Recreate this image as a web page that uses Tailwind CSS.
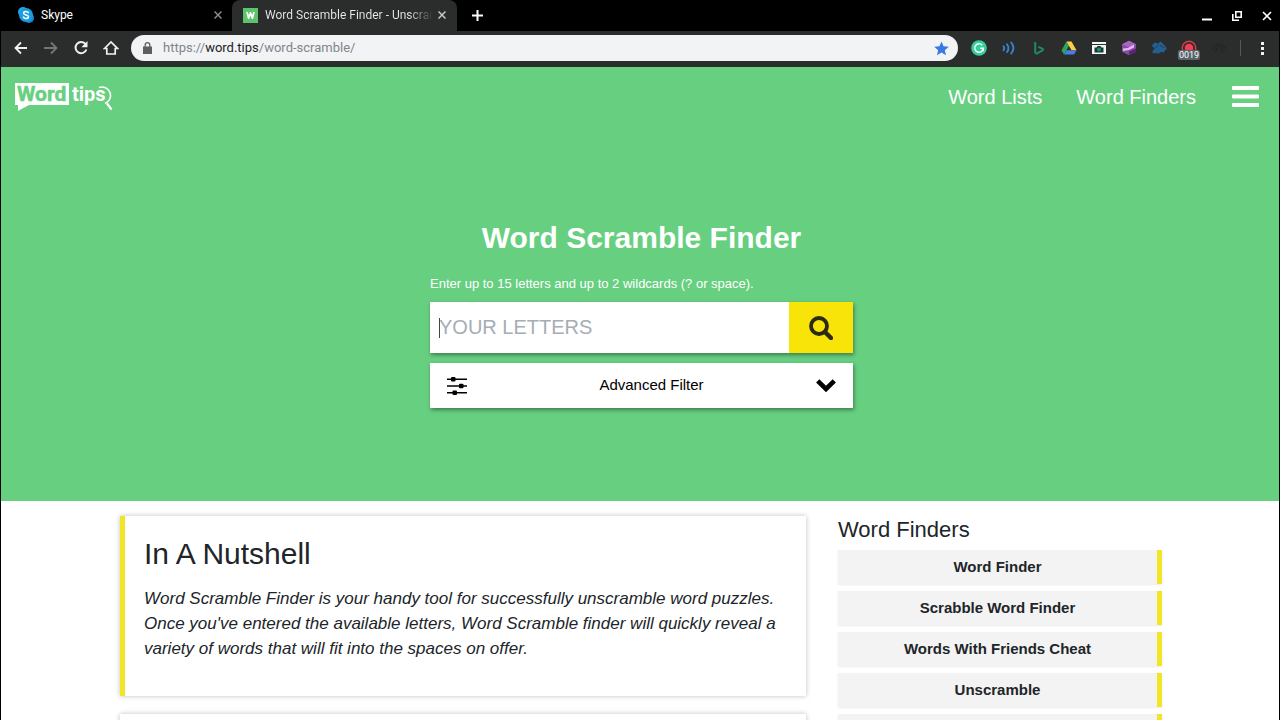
<!DOCTYPE html>
<html lang="en">
<head>
  <meta charset="UTF-8" />
  <meta name="viewport" content="width=device-width, initial-scale=1.0" />
  <title>Word Scramble Finder - Unscramble Words</title>
  <script src="https://cdn.jsdelivr.net/npm/@tailwindcss/browser@4"></script>
</head>
<body class="h-screen overflow-hidden flex flex-col bg-black font-['Liberation_Sans',Arial,sans-serif] text-[#212529]">

  <!-- Tab strip -->
  <div class="h-[31px] shrink-0 flex items-center text-white font-[Roboto,sans-serif] text-xs">
    <div class="w-[232px] h-full flex items-center pl-[18px] pr-[10px] pb-px">
      <svg class="w-4 h-4 shrink-0" viewBox="0 0 16 16">
        <circle cx="5" cy="5" r="5" fill="#1fa8e6" />
        <circle cx="11" cy="11" r="5" fill="#1487d4" />
        <circle cx="8" cy="8" r="7" fill="#1a9ce0" />
        <path d="M10.4 5.6C9.8 4.7 8.9 4.4 8 4.4c-1.400 0-2.400.7-2.400 1.800 0 2.500 4.900 1.200 4.900 3.600 0 1.100-1.100 1.800-2.500 1.800-1.200 0-2.100-.5-2.600-1.500" fill="none" stroke="#fff" stroke-width="1.500" stroke-linecap="round" />
      </svg>
      <span class="ml-[7px] grow">Skype</span>
      <button class="w-2 h-4 flex items-center justify-center" aria-label="Close tab">
        <svg class="w-2 h-2" viewBox="0 0 8 8" stroke="#8a8a8a" stroke-width="1.500"><path d="M.5.5l7 7M7.500.5l-7 7" /></svg>
      </button>
    </div>
    <div class="w-[225px] h-full flex items-center pl-[11px] pr-[11px] pb-px rounded-t-lg bg-[#2b2d2d]">
      <span class="w-[15px] h-[15px] shrink-0 flex items-center justify-center bg-[#5cc46a]">
        <svg class="w-[9px] h-[7px]" viewBox="0 0 9 7" fill="none" stroke="#fff" stroke-width="1.800"><path d="M1 0l1.600 6L4.500 1.200 6.400 6 8 0" /></svg>
      </span>
      <span class="ml-[7px] w-[168px] shrink-0 whitespace-nowrap bg-linear-to-r from-[#e8eaed] from-85% to-transparent bg-clip-text text-transparent">Word Scramble Finder - Unscram</span>
      <button class="ml-auto w-2 h-4 shrink-0 flex items-center justify-center" aria-label="Close tab">
        <svg class="w-2 h-2" viewBox="0 0 8 8" stroke="#c8c8c8" stroke-width="1.500"><path d="M.5.5l7 7M7.500.5l-7 7" /></svg>
      </button>
    </div>
    <button class="w-10 h-full flex items-center justify-center" aria-label="New tab">
      <svg class="w-[11px] h-[11px]" viewBox="0 0 11 11" stroke="#fff" stroke-width="2"><path d="M5.500 0v11M0 5.500h11" /></svg>
    </button>
    <div class="ml-auto flex items-center gap-5 pr-2">
      <button aria-label="Minimize"><svg class="w-[10px] h-[10px]" viewBox="0 0 10 10" fill="#fff"><path d="M0 7.500h10v2H0z" /></svg></button>
      <button aria-label="Restore">
        <svg class="w-[10px] h-[10px]" viewBox="0 0 10 10" fill="none" stroke="#fff" stroke-width="1.600"><path d="M3.800.8h5.400v5.400H3.800zM.8 3v6.200H7" /></svg>
      </button>
      <button aria-label="Close"><svg class="w-[10px] h-[10px]" viewBox="0 0 10 10" stroke="#fff" stroke-width="1.700"><path d="M1 1l8 8M9 1l-8 8" /></svg></button>
    </div>
  </div>

  <!-- Toolbar -->
  <div class="h-9 shrink-0 mx-px flex items-center bg-[#2b2d2d] pl-3 pr-[9px] pb-[2px]">
    <div class="flex items-center gap-[14px]">
      <button aria-label="Back">
        <svg class="w-4 h-4" viewBox="0 0 16 16" fill="none" stroke="#f1f1f1" stroke-width="1.800"><path d="M14 8H2.500M8 2.500L2.500 8 8 13.500" /></svg>
      </button>
      <button aria-label="Forward">
        <svg class="w-4 h-4" viewBox="0 0 16 16" fill="none" stroke="#747676" stroke-width="1.800"><path d="M1 8h12.500M8 2.500l5.500 5.500L8 13.500" /></svg>
      </button>
      <button aria-label="Reload">
        <svg class="w-4 h-4" viewBox="0 0 16 16"><path d="M12.600 4.200A5.600 5.600 0 1 0 13.400 9.500" fill="none" stroke="#f1f1f1" stroke-width="2" /><path d="M14.500 1v6.200H8.300z" fill="#f1f1f1" /></svg>
      </button>
      <button aria-label="Home">
        <svg class="w-4 h-4" viewBox="0 0 16 16" fill="none" stroke="#f1f1f1" stroke-width="1.700"><path d="M1.500 8.500L8 2l6.500 6.500H12.200V14H3.800V8.500z" /></svg>
      </button>
    </div>
    <div class="ml-3 grow h-[26px] flex items-center rounded-full bg-[#f1f3f4] pl-3 pr-[9px] font-[Roboto,sans-serif] text-[13px]">
      <svg class="w-[9px] h-3" viewBox="0 0 9 12"><path d="M0 4.500h9V12H0z" fill="#5c5f61" /><path d="M2.200 5V3a2.300 2.300 0 0 1 4.600 0v2" fill="none" stroke="#5c5f61" stroke-width="1.300" /></svg>
      <p class="ml-[11px] grow text-[#80868b]">https://<span class="text-[#202124]">word.tips</span>/word-scramble/</p>
      <svg class="w-[15px] h-[15px]" viewBox="0 0 24 24" fill="#3b78e7"><path d="M12 .8l3.300 7.700 8.400.7-6.400 5.500 2 8.200L12 18.500l-7.300 4.400 2-8.200L.3 9.200l8.400-.7z" /></svg>
    </div>
    <div class="ml-[13px] flex items-center gap-[14px]">
      <svg class="w-4 h-4" viewBox="0 0 16 16"><circle cx="8" cy="8" r="7.800" fill="#35cf98" /><path d="M11.300 5.200A4.300 4.300 0 1 0 12.300 8.300H9.200M12.200 8.300v2.900" fill="none" stroke="#fff" stroke-width="1.400" /></svg>
      <svg class="w-4 h-4" viewBox="0 0 16 16" fill="none" stroke="#3a80cc" stroke-width="1.900" stroke-linecap="round"><path d="M2.500 6.200q1.500 2 0 4M6 4.200q3 4 0 7.800M10.200 2.500q4.500 5.500 0 11" /></svg>
      <svg class="w-4 h-4" viewBox="0 0 16 16" fill="none" stroke="#1f8a62" stroke-width="2" stroke-linejoin="round"><path d="M4.200 2v10.800l1.600.8 6-3.400V8.800L7.300 6.900" /></svg>
      <svg class="w-4 h-4" viewBox="0 0 16 16"><path d="M5.500 1.500L8 5.800 3 14.500.500 10.200z" fill="#2ba55c" /><path d="M5.500 1.500h5l5 8.700h-5z" fill="#f9cf48" /><path d="M5.500 10.200h10L13 14.500H3z" fill="#4b7de0" /></svg>
      <svg class="w-4 h-4" viewBox="0 0 16 16"><path d="M1 2h14v2H1zM1 5h14v9H1z" fill="#f3f5f5" /><path d="M3.500 7.500h2L6.500 6h3l1 1.500h2v5h-9z" fill="#173b35" /><circle cx="8" cy="9.600" r="2" fill="#2c8a75" /></svg>
      <svg class="w-4 h-4" viewBox="0 0 16 16"><path d="M8 .8l7 3.500v7.500l-7 3.500-7-3.500V4.300z" fill="#8a4ba6" /><path d="M8 .8l7 3.500L8 7.500 1 4.300z" fill="#a565c0" /><path d="M2 8.500l5-.5 6-3.500v3L8 10l-6 1z" fill="#dcbce8" /><path d="M8 11.500l7-3v3.300l-7 3.500z" fill="#5d2379" /></svg>
      <svg class="w-4 h-4" viewBox="0 0 16 16" fill="#245f91"><path d="M.8 5.500l3-3 3 1 3-2 3 3 3 3.700-3.500 4.500-2-1-2 1.500H2.500L1 12l2.500-3.500z" /><path d="M4 8.500l4-4M9 5l4 3" stroke="#173e60" /></svg>
      <div class="relative w-4 h-4">
        <svg class="w-4 h-4" viewBox="0 0 16 16"><circle cx="8" cy="8" r="6.800" fill="#46272d" stroke="#c4404d" stroke-width="1.500" /><circle cx="8" cy="8" r="4.200" fill="#eb4354" /></svg>
        <span class="absolute left-1/2 top-[10px] -translate-x-1/2 rounded-xs bg-[#59636a] px-px text-[9px] leading-[10px] text-white font-[Roboto,sans-serif]">0019</span>
      </div>
      <svg class="w-4 h-4" viewBox="0 0 16 16" fill="none" stroke="#242626" stroke-width="1.500"><path d="M1 9q7-9 14 0M4 12l3-5M10 6l2 6" /></svg>
    </div>
    <div class="ml-[13px] w-px h-4 bg-[#56595a]"></div>
    <button class="ml-[13px] w-4 flex justify-center" aria-label="Browser menu">
      <svg class="w-[3px] h-[13px]" viewBox="0 0 3 13" fill="#f1f1f1"><path d="M0 0h3v3H0zM0 5h3v3H0zM0 10h3v3H0z" /></svg>
    </button>
  </div>

  <!-- Page -->
  <div class="mx-px grow min-h-0 overflow-hidden bg-white">
    <header class="bg-[#67cf80] text-white pb-[93px]">
      <div class="flex items-center h-[59px] pl-[14px] pr-5">
        <a href="#" aria-label="Word tips">
          <svg class="w-[98px] h-[29px]" viewBox="0 0 98 29">
            <path d="M0 1h54v22H14L3 29V23H0z" fill="#fff" />
            <text x="2" y="19" font-family="Roboto" font-weight="700" font-size="21" fill="#67cf80" stroke="#67cf80" stroke-width="0.500">Word</text>
            <text x="57" y="19" font-family="Roboto" font-weight="700" font-size="20" fill="#fff">tips</text>
            <path d="M84 5.500A8.500 8.500 0 0 1 90 21.500" fill="none" stroke="#fff" stroke-width="1.600" />
            <path d="M92 21.500l4.500 6" fill="none" stroke="#fff" stroke-width="2.200" />
          </svg>
        </a>
        <nav class="ml-auto flex items-center text-xl">
          <a href="#" class="mr-[34px]">Word Lists</a>
          <a href="#" class="mr-9">Word Finders</a>
          <button aria-label="Menu">
            <svg class="w-[27px] h-[22px]" viewBox="0 0 27 22" fill="#fff"><rect width="27" height="4" rx="1" /><rect y="8.500" width="27" height="4" rx="1" /><rect y="17" width="27" height="4" rx="1" /></svg>
          </button>
        </nav>
      </div>

      <form class="w-full max-w-[426px] mx-auto pl-[3px] pt-[92px]">
        <h1 class="text-center text-3xl leading-10 font-bold">Word Scramble Finder</h1>
        <label for="letters" class="block mt-4 text-[13px] leading-5">Enter up to 15 letters and up to 2 wildcards (? or space).</label>
        <div class="mt-2 flex h-[51px] shadow-[1px_2px_4px_rgba(0,0,0,0.4)]">
          <div class="relative grow bg-white">
            <input id="letters" type="text" placeholder="YOUR LETTERS" class="w-full h-full pl-[9px] text-xl text-[#212529] placeholder:text-[#a5adb5] outline-none" />
            <span class="absolute left-[9px] top-4 w-px h-5 bg-[#444]"></span>
          </div>
          <button type="submit" class="w-16 flex items-center justify-center bg-[#f8e408]" aria-label="Search">
            <svg class="w-6 h-6" viewBox="0 0 24 24" fill="none" stroke="#2b2a12"><circle cx="10" cy="10" r="8" stroke-width="3.800" /><path d="M16 16l6 6" stroke-width="4.500" stroke-linecap="round" /></svg>
          </button>
        </div>
        <button type="button" class="mt-[10px] w-full h-[45px] flex items-center justify-between bg-white text-black px-[17px] shadow-[1px_2px_4px_rgba(0,0,0,0.4)]">
          <svg class="w-5 h-[18px]" viewBox="0 0 20 18"><path d="M0 2.200h20M0 9h20M0 15.800h20" stroke="#000" stroke-width="1.600" /><rect x="4" width="4.500" height="4.500" rx="1" /><rect x="12" y="6.800" width="4.500" height="4.500" rx="1" /><rect x="5.500" y="13.500" width="4.500" height="4.500" rx="1" /></svg>
          <span class="text-[15px] pl-5">Advanced Filter</span>
          <svg class="w-5 h-[13px]" viewBox="0 0 20 13" fill="none" stroke="#000" stroke-width="4.600"><path d="M1.700 1.800L10 10 18.300 1.800" /></svg>
        </button>
      </form>
    </header>

    <div class="max-w-[1072px] mx-auto pl-4 pr-[14px] pt-[15px] flex gap-8">
      <main class="grow space-y-[18px]">
        <section class="h-[180px] border-l-[5px] border-[#f2e526] bg-white pl-[19px] pr-6 pt-[18px] shadow-[0_0_5px_rgba(0,0,0,0.25)]">
          <h2 class="text-3xl leading-10">In A Nutshell</h2>
          <p class="mt-3 text-[17px] leading-[25px] italic">Word Scramble Finder is your handy tool for successfully unscramble word puzzles. Once you've entered the available letters, Word Scramble finder will quickly reveal a variety of words that will fit into the spaces on offer.</p>
        </section>
        <section class="h-[180px] bg-white shadow-[0_0_5px_rgba(0,0,0,0.25)]"></section>
      </main>

      <aside class="w-[324px] shrink-0">
        <h2 class="text-[22px] leading-7">Word Finders</h2>
        <nav class="mt-[6px] flex flex-col gap-[7px] text-center text-[15px] font-bold leading-[34px]">
          <a href="#" class="border-r-[5px] border-[#f2e526] bg-[#f3f3f3] shadow-[0_1px_2px_rgba(0,0,0,0.08)]">Word Finder</a>
          <a href="#" class="border-r-[5px] border-[#f2e526] bg-[#f3f3f3] shadow-[0_1px_2px_rgba(0,0,0,0.08)]">Scrabble Word Finder</a>
          <a href="#" class="border-r-[5px] border-[#f2e526] bg-[#f3f3f3] shadow-[0_1px_2px_rgba(0,0,0,0.08)]">Words With Friends Cheat</a>
          <a href="#" class="border-r-[5px] border-[#f2e526] bg-[#f3f3f3] shadow-[0_1px_2px_rgba(0,0,0,0.08)]">Unscramble</a>
          <div class="h-[34px] border-r-[5px] border-[#f2e526] bg-[#f3f3f3] shadow-[0_1px_2px_rgba(0,0,0,0.08)]"></div>
        </nav>
      </aside>
    </div>
  </div>

</body>
</html>
